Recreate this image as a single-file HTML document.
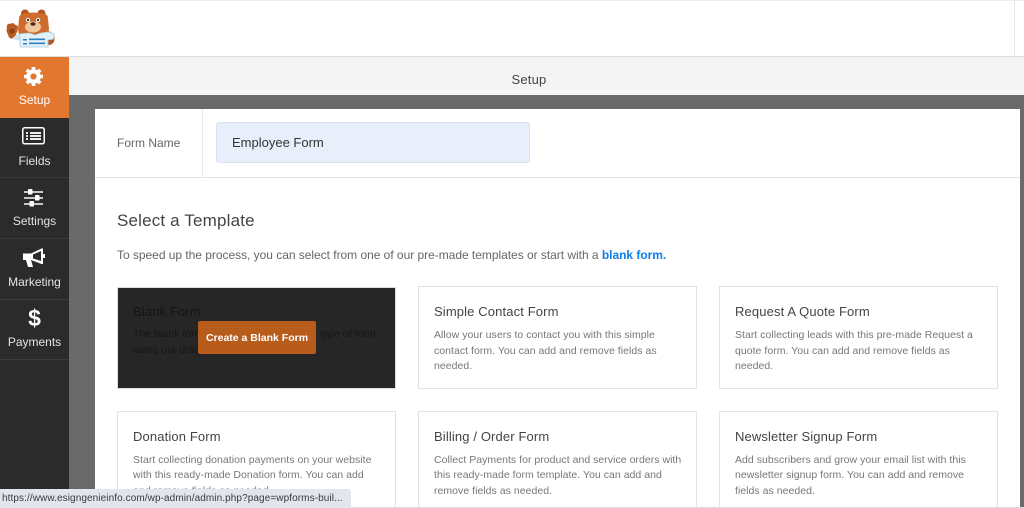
<!DOCTYPE html>
<html><head><meta charset="utf-8">
<style>
html,body{margin:0;padding:0;width:1024px;height:508px;overflow:hidden;background:#fff;font-family:"Liberation Sans",sans-serif}
.a{position:absolute;white-space:nowrap}
#stage{position:absolute;left:0;top:0;width:1024px;height:508px;overflow:hidden}
.side{left:0;width:69px;color:#e4e4e4;font-size:12px;text-align:center}
.sep{left:0;width:69px;height:1px;background:#3a3a3a}
.card{position:absolute;box-sizing:border-box;width:279px;height:103px;border:1px solid #e2e2e2;background:#fff}
.t{font-size:13px;color:#444;letter-spacing:.13px}
.d{font-size:10.5px;color:#777;letter-spacing:.03px}
</style></head><body><div id="stage">
<div class="a" style="left:0;top:0;width:1024px;height:1px;background:#eee"></div>
<div class="a" style="left:1014px;top:0;width:1px;height:56px;background:#e8e8e8"></div>
<div class="a" style="left:0;top:56px;width:1024px;height:1px;background:#ddd"></div>
<div class="a" style="left:69px;top:57px;width:955px;height:38px;background:#f4f4f4"></div>
<div class="a" style="left:69px;top:72px;width:920px;text-align:center;font-size:13px;color:#444;letter-spacing:.2px">Setup</div>
<div class="a" style="left:69px;top:95px;width:955px;height:413px;background:#6a6a6a"></div>
<div class="a" style="left:95px;top:109px;width:925px;height:399px;background:#fff"></div>

<svg class="a" style="left:0;top:0" width="60" height="54" viewBox="0 0 60 54">
<circle cx="25" cy="13.500" r="4" fill="#b4541f"/><circle cx="41.500" cy="13.500" r="4" fill="#b4541f"/>
<path d="M48 31q7 2 6.500 8t-6.500 6z" fill="#b4541f"/>
<path d="M22 14q11-3 23 0q3 1 3 5l1 10-1 7H19l-1-7 1-10q0-4 3-5z" fill="#cf6c2d"/>
<path d="M6.500 31l.5-6 2-1.500 1.500.5 1.500-1 2 .5 1.500 1.500 2.500 1-.5 5-2.500 5.500-3 2.500-3-1.500z" fill="#b85a24"/>
<ellipse cx="12" cy="31" rx="2.600" ry="2.600" fill="#8a4219"/>
<path d="M12 38.500l4-3.500 5-1v7l-5-1z" fill="#cfe3ee"/>
<ellipse cx="33" cy="27" rx="8" ry="5.500" fill="#f0c79a"/>
<circle cx="28" cy="20" r="2.200" fill="#fff"/><circle cx="38" cy="20" r="2.200" fill="#fff"/>
<circle cx="28" cy="20" r="1.200" fill="#333"/><circle cx="38" cy="20" r="1.200" fill="#333"/>
<ellipse cx="33" cy="24" rx="2.600" ry="1.700" fill="#4a2a1a"/>
<path d="M19 34l10-1 6 2 6-2 7-1 6 1.500-.5 5.500-5.500 1v7H20v-9z" fill="#e2f0f7" stroke="#a9cfe0" stroke-width=".8"/>
<rect x="23" y="39" width="4" height="1.500" fill="#2f80c4"/><rect x="29" y="38.500" width="16" height="1.600" fill="#2f80c4"/>
<rect x="23" y="43" width="4" height="1.500" fill="#2f80c4"/><rect x="29" y="42.500" width="16" height="1.600" fill="#2f80c4"/>
</svg>

<div class="a" style="left:0;top:57px;width:69px;height:61px;background:#e27730"></div>
<div class="a" style="left:0;top:118px;width:69px;height:390px;background:#2b2b2b"></div>
<div class="a sep" style="top:177px"></div><div class="a sep" style="top:238px"></div><div class="a sep" style="top:299px"></div><div class="a sep" style="top:359px"></div>

<svg class="a" style="left:24px;top:67px" width="19" height="19" viewBox="0 0 19 19"><circle cx="9.500" cy="9.500" r="5.200" fill="none" stroke="#fff" stroke-width="4.200"/><g stroke="#fff" stroke-width="3.600"><path d="M9.500 0v3.500M9.500 15.500V19M0 9.500h3.500M15.500 9.500H19M2.800 2.800l2.500 2.500M13.700 13.700l2.500 2.500M2.800 16.200l2.500-2.500M13.700 5.300l2.500-2.500"/></g></svg>
<div class="a side" style="top:93px;color:#fff">Setup</div>

<svg class="a" style="left:22px;top:127px" width="23" height="18" viewBox="0 0 23 18"><rect x=".75" y=".75" width="21.500" height="16" rx="2" fill="#2b2b2b" stroke="#fff" stroke-width="1.500"/><path d="M4 6h2M4 9h2M4 12h2M8 6h11M8 9h11M8 12h11" stroke="#eee" stroke-width="2"/></svg>
<div class="a side" style="top:154px">Fields</div>

<svg class="a" style="left:24px;top:189px" width="19" height="18" viewBox="0 0 19 18"><path d="M0 3h19M0 9h19M0 15h19" stroke="#ddd" stroke-width="1.800"/><rect x="4" y="0" width="4.500" height="5.500" rx=".8" fill="#fff"/><rect x="11" y="6" width="4.500" height="5.500" rx=".8" fill="#fff"/><rect x="5.500" y="12" width="4.500" height="5.500" rx=".8" fill="#fff"/></svg>
<div class="a side" style="top:214px">Settings</div>

<svg class="a" style="left:22px;top:248px" width="23" height="20" viewBox="0 0 23 20"><path d="M1 5.500h8L19.500 .5h1.500v15.500h-1.500L9 12l2 7H6L4 12H1z" fill="#fff"/><path d="M11 6.500l8-3.500v10l-8-2.500z" fill="#2b2b2b"/><rect x="21" y="6" width="2" height="4" fill="#fff"/></svg>
<div class="a side" style="top:275px">Marketing</div>

<div class="a" style="left:0;top:304px;width:69px;text-align:center;color:#fff;font-size:23px;font-weight:bold;line-height:28px">$</div>
<div class="a side" style="top:335px">Payments</div>

<div class="a" style="left:95px;top:177px;width:925px;height:1px;background:#e4e4e4"></div>
<div class="a" style="left:202px;top:109px;width:1px;height:68px;background:#e8e8e8"></div>
<div class="a" style="left:117px;top:136px;font-size:12px;color:#666">Form Name</div>
<div class="a" style="left:216px;top:122px;width:314px;height:41px;box-sizing:border-box;background:#e8effb;border:1px solid #d8e2f0;border-radius:3px"></div>
<div class="a" style="left:232px;top:135px;font-size:13px;color:#333">Employee Form</div>

<div class="a" style="left:117px;top:211px;font-size:17px;color:#444;letter-spacing:.17px">Select a Template</div>
<div class="a" style="left:117px;top:248px;font-size:12px;color:#666;letter-spacing:-.03px">To speed up the process, you can select from one of our pre-made templates or start with a <b style="color:#0d7ee8">blank form.</b></div>

<div class="a" style="left:117px;top:287px;width:279px;height:102px;box-sizing:border-box;background:#262626;border:1px solid #ddd"></div>
<div class="a t" style="left:133px;top:304px;color:#151515">Blank Form</div>
<div class="a d" style="left:133px;top:328px;color:#161616">The blank form</div>
<div class="a d" style="left:320px;top:328px;color:#161616">type of form</div>
<div class="a d" style="left:133px;top:344px;color:#161616">using our drag</div>
<div class="a" style="left:198px;top:321px;width:118px;height:33px;background:#b85c1c;border-radius:2px;color:#fff;font-size:10.500px;font-weight:bold;text-align:center;line-height:35px">Create a Blank Form</div>

<div class="card" style="left:418px;top:286px"></div>
<div class="a t" style="left:434px;top:304px">Simple Contact Form</div>
<div class="a d" style="left:434px;top:329px">Allow your users to contact you with this simple</div>
<div class="a d" style="left:434px;top:345px">contact form. You can add and remove fields as</div>
<div class="a d" style="left:434px;top:360px">needed.</div>

<div class="card" style="left:719px;top:286px"></div>
<div class="a t" style="left:735px;top:304px">Request A Quote Form</div>
<div class="a d" style="left:735px;top:329px">Start collecting leads with this pre-made Request a</div>
<div class="a d" style="left:735px;top:345px">quote form. You can add and remove fields as</div>
<div class="a d" style="left:735px;top:360px">needed.</div>

<div class="card" style="left:117px;top:411px;height:110px"></div>
<div class="a t" style="left:133px;top:429px">Donation Form</div>
<div class="a d" style="left:133px;top:454px">Start collecting donation payments on your website</div>
<div class="a d" style="left:133px;top:469px">with this ready-made Donation form. You can add</div>
<div class="a d" style="left:133px;top:485px">and remove fields as needed.</div>

<div class="card" style="left:418px;top:411px;height:110px"></div>
<div class="a t" style="left:434px;top:429px">Billing / Order Form</div>
<div class="a d" style="left:434px;top:454px">Collect Payments for product and service orders with</div>
<div class="a d" style="left:434px;top:469px">this ready-made form template. You can add and</div>
<div class="a d" style="left:434px;top:485px">remove fields as needed.</div>

<div class="card" style="left:719px;top:411px;height:110px"></div>
<div class="a t" style="left:735px;top:429px">Newsletter Signup Form</div>
<div class="a d" style="left:735px;top:454px">Add subscribers and grow your email list with this</div>
<div class="a d" style="left:735px;top:469px">newsletter signup form. You can add and remove</div>
<div class="a d" style="left:735px;top:485px">fields as needed.</div>

<div class="a" style="left:0;top:507px;width:1024px;height:1px;background:#ddd"></div>
<div class="a" style="left:0;top:489px;width:351px;height:19px;background:#e1e5ee;border-radius:0 3px 0 0;font-size:10px;color:#3a3a3a;line-height:19px;padding-left:2px;box-sizing:border-box;letter-spacing:.09px">https://www.esigngenieinfo.com/wp-admin/admin.php?page=wpforms-buil...</div>
</div></body></html>
